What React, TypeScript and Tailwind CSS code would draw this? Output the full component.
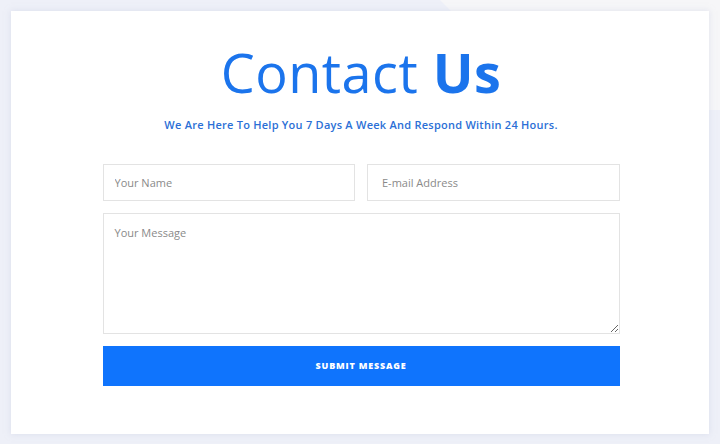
export default function App() {
  const font = { fontFamily: '"Open Sans", "Liberation Sans", sans-serif' };
  return (
    <div
      className="relative w-[720px] h-[444px] bg-[#eef0f8] p-[11px] overflow-hidden"
      style={font}
    >
      {/* decorative light panel behind the card, top right */}
      <div className="absolute left-[440px] top-0 right-0 h-[110px] bg-[#f6f6f8] [clip-path:polygon(0_0,100%_0,100%_100%,110px_100%)]" />
      <div className="relative h-[423px] bg-white shadow-[0_0_6px_rgba(200,205,225,0.5)] flex flex-col items-center pt-[28px] pl-[2px]">
        <h1 className="text-[54px] leading-[66px] text-[#1b74ec] font-normal tracking-[0.5px]">
          Contact <span className="font-bold">Us</span>
        </h1>
        <p className="mt-[13px] text-[11px] font-semibold text-[#2b6fd6] leading-[14px] tracking-[0.25px]">
          We Are Here To Help You 7 Days A Week And Respond Within 24 Hours.
        </p>
        <form className="w-[517px] mt-[32px] flex flex-col gap-[12px]">
          <div className="grid grid-cols-2 gap-[12px]">
            <input
              placeholder="Your Name"
              className="h-[37px] border border-[#e3e3e3] px-[11px] text-[11px] text-[#555] placeholder:text-[#8a8a8a] outline-none"
            />
            <input
              placeholder="E-mail Address"
              className="h-[37px] border border-[#e3e3e3] px-[14px] text-[11px] text-[#555] placeholder:text-[#8a8a8a] outline-none"
            />
          </div>
          <textarea
            placeholder="Your Message"
            className="h-[121px] border border-[#e3e3e3] px-[11px] py-[11px] text-[11px] text-[#555] placeholder:text-[#8a8a8a] outline-none"
          />
          <button
            type="button"
            className="h-[40px] bg-[#0f74fd] text-white text-[9px] font-extrabold tracking-[0.8px]"
          >
            SUBMIT MESSAGE
          </button>
        </form>
      </div>
    </div>
  );
}
